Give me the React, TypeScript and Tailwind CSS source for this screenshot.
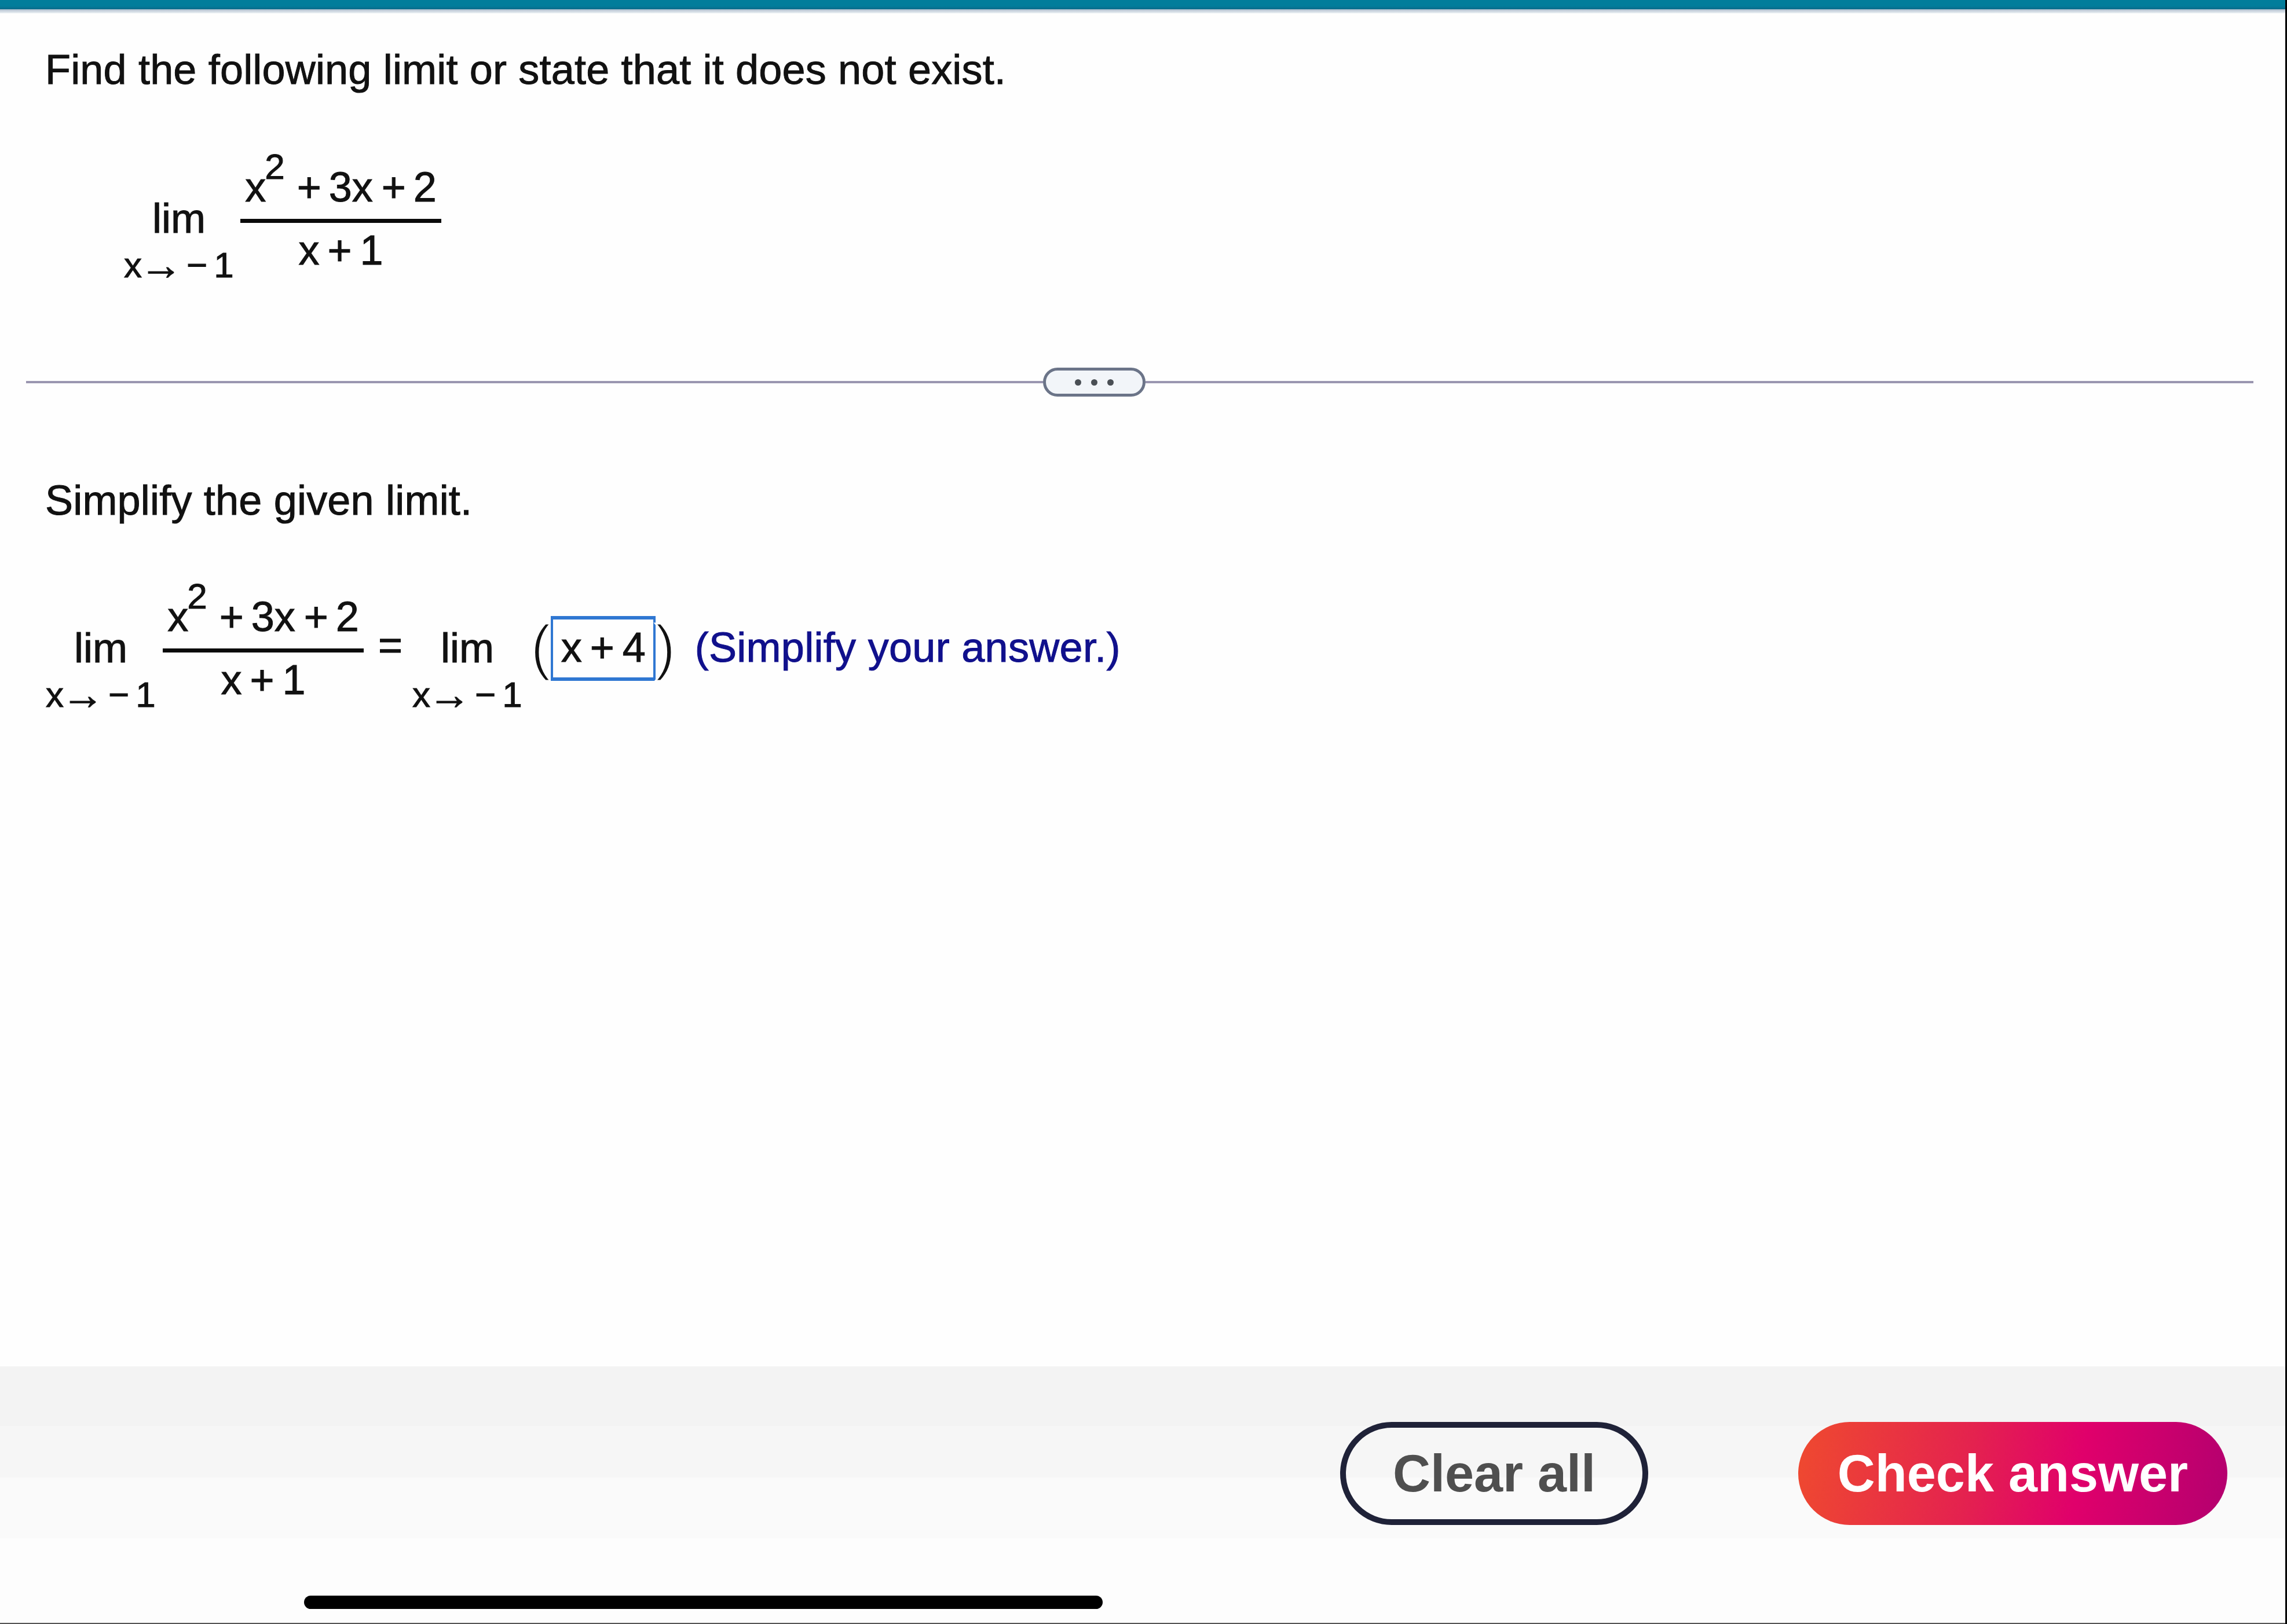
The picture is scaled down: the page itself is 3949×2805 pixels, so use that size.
import React from "react";

function Op({ children }: { children: React.ReactNode }) {
  return <span className="mx-[14px]">{children}</span>;
}

function Lim() {
  return (
    <div className="mt-[54px] flex w-[190px] flex-col items-center">
      <div className="text-[72px] leading-[80px]">lim</div>
      <div className="mt-[6px] flex w-full whitespace-pre text-[62px] leading-[70px]">
        <span>x</span>
        <span className="-ml-[4px] text-[74px]">→</span>
        <span className="ml-[7px]">−</span>
        <span className="ml-[11px]">1</span>
      </div>
    </div>
  );
}

function Frac() {
  return (
    <div className="flex w-[347px] flex-col items-center text-[72px] leading-[80px]">
      <div className="whitespace-nowrap">
        <span>x</span>
        <span className="-ml-[2px] align-[39px] text-[62px] leading-[0]">2</span>
        <span className="ml-[21px] mr-[13px]">+</span>
        <span>3x</span>
        <span className="ml-[15px] mr-[13px]">+</span>
        <span>2</span>
      </div>
      <div className="mt-[15px] h-[7px] w-full bg-[#0a0a0a]" />
      <div className="mt-[7px] whitespace-nowrap">
        <span>x</span>
        <Op>+</Op>
        <span>1</span>
      </div>
    </div>
  );
}

export default function App() {
  return (
    <div className="flex h-[2805px] w-[3949px] flex-col overflow-hidden border-r-[3px] border-r-black bg-[#fefefe] font-['Liberation_Sans',Arial,sans-serif] text-[#111111] [-webkit-text-stroke:1px_currentColor]">
      <div className="h-[16px] shrink-0 bg-[linear-gradient(to_bottom,#027d9b_0%,#027d9b_65%,#0b6a8a_100%)]" />
      <div className="h-[7px] shrink-0 bg-[linear-gradient(to_bottom,#adbdcd,#eef2f5)]" />

      <div className="ml-[78px] mt-[57px] text-[72px] leading-[80px] tracking-[0.18px]">
        Find the following limit or state that it does not exist.
      </div>

      <div className="ml-[214px] mt-[123px] flex items-start">
        <Lim />
        <div className="ml-[11px]">
          <Frac />
        </div>
      </div>

      <div className="ml-[45px] mr-[55px] mt-[142px] flex items-center">
        <div className="h-[4px] w-[1756px] bg-[#9a96b0]" />
        <div className="flex h-[50px] w-[177px] items-center justify-center gap-[17px] rounded-full border-[5px] border-[#6b7488] bg-[#f2f5f9]">
          <span className="h-[11px] w-[11px] rounded-full bg-[#4a4f55]" />
          <span className="h-[11px] w-[11px] rounded-full bg-[#4a4f55]" />
          <span className="h-[11px] w-[11px] rounded-full bg-[#4a4f55]" />
        </div>
        <div className="h-[4px] flex-1 bg-[#9a96b0]" />
      </div>

      <div className="ml-[78px] mt-[139px] text-[72px] leading-[80px] tracking-[0.2px]">Simplify the given limit.</div>

      <div className="ml-[79px] mt-[121px] flex items-start">
        <Lim />
        <div className="ml-[12px]">
          <Frac />
        </div>
        <div className="ml-[25px] mt-[49px] text-[72px] leading-[80px]">=</div>
        <div className="ml-[17px]">
          <Lim />
        </div>
        <div className="ml-[14px] mt-[36px] text-[106px] leading-[112px] [-webkit-text-stroke:3px_#fefefe]">(</div>
        <div className="mt-[39px] flex h-[112px] w-[181px] items-center justify-center border-x-[4px] border-y-[6px] border-[#2f77d2] pb-[4px] text-[72px] leading-[80px]">
          <span>x</span>
          <Op>+</Op>
          <span>4</span>
        </div>
        <div className="-ml-[1px] mt-[36px] text-[106px] leading-[112px] [-webkit-text-stroke:3px_#fefefe]">)</div>
        <div className="ml-[33px] mt-[53px] whitespace-nowrap text-[72px] leading-[80px] tracking-[0.3px] text-[#10108c]">
          (Simplify your answer.)
        </div>
      </div>

      <div className="mt-auto flex flex-col border-b-[2px] border-b-[#555555] bg-[linear-gradient(to_bottom,#f3f3f3_0,#f3f3f3_103px,#f6f6f6_103px,#f6f6f6_192px,#fafafa_192px,#fafafa_297px,#fdfdfd_297px,#fdfdfd_100%)] pb-[24px] pt-[96px]">
        <div className="ml-[2314px] flex items-center gap-[259px]">
          <button className="flex h-[178px] w-[532px] items-center justify-center rounded-full border-[10px] border-[#1f2238] text-[90px] font-bold text-[#4f4f4f] [-webkit-text-stroke:0]">
            Clear all
          </button>
          <button className="flex h-[178px] w-[741px] items-center justify-center rounded-full bg-[linear-gradient(100deg,#ef4a2f_0%,#e4224f_40%,#e0006b_65%,#b3006f_100%)] text-[90px] font-bold text-white [-webkit-text-stroke:0]">
            Check answer
          </button>
        </div>
        <div className="ml-[525px] mt-[122px] h-[23px] w-[1379px] rounded-full bg-black" />
      </div>
    </div>
  );
}
